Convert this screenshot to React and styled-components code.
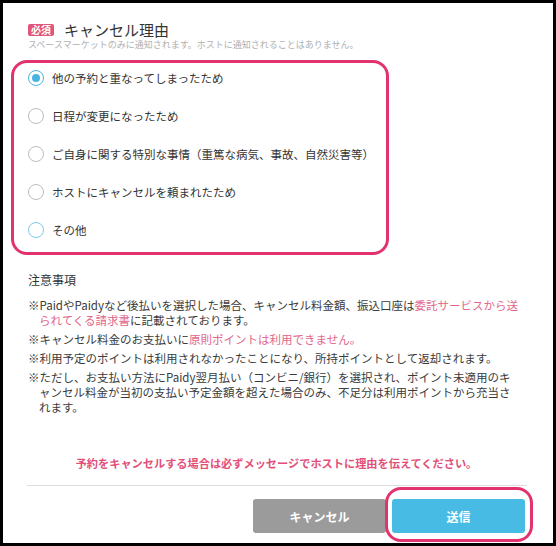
import React from "react";
import styled, { createGlobalStyle } from "styled-components";

const Global = createGlobalStyle`
  html, body { margin: 0; padding: 0; background: #000; }
  body { font-family: "Noto Sans CJK JP", "Noto Sans", sans-serif; }
  * { box-sizing: border-box; }
`;

const Frame = styled.div`
  width: 556px;
  height: 546px;
  padding: 3px;
  background: #000;
`;

const Panel = styled.div`
  width: 550px;
  height: 540px;
  background: #fff;
  padding: 19px 28px 0 25px;
  display: flex;
  flex-direction: column;
  color: #333;
`;

const Header = styled.div`
  display: flex;
  align-items: center;
  gap: 10px;
  height: 16px;
`;

const Badge = styled.span`
  background: #e2557a;
  color: #fff;
  font-size: 10px;
  font-weight: 700;
  line-height: 12px;
  height: 12px;
  padding: 0 3px;
  border-radius: 2px;
`;

const Title = styled.h2`
  margin: 0;
  font-size: 15px;
  font-weight: 400;
  color: #333;
  line-height: 16px;
`;

const Sub = styled.p`
  margin: 1px 0 0;
  font-size: 9px;
  color: #b0b0b0;
  line-height: 12px;
`;

const RadioBox = styled.div`
  margin: 9px 0 0 -17px;
  width: 378px;
  border: 3px solid #e3336c;
  border-radius: 16px;
  padding: 5px 8px 12px 14px;
  display: flex;
  flex-direction: column;
  gap: 18px;
`;

const Row = styled.label`
  display: flex;
  align-items: center;
  gap: 8px;
  height: 20px;
  font-size: 11.5px;
  color: #333;
`;

const Circle = styled.span`
  width: 16px;
  height: 16px;
  border-radius: 50%;
  border: 1px solid ${(p) => (p.$checked ? "#4ab4e2" : p.$focus ? "#7cc9e8" : "#bdbdbd")};
  display: flex;
  align-items: center;
  justify-content: center;
  flex: none;
  &::after {
    content: "";
    width: 8px;
    height: 8px;
    border-radius: 50%;
    background: ${(p) => (p.$checked ? "#4ab4e2" : "transparent")};
  }
`;

const NoteTitle = styled.h3`
  margin: 17px 0 0;
  font-size: 12px;
  font-weight: 400;
  color: #333;
  line-height: 16px;
`;

const Notes = styled.ul`
  list-style: none;
  margin: 10px -4px 0 0;
  padding: 0;
  display: flex;
  flex-direction: column;
  gap: 4px;
`;

const Note = styled.li`
  font-size: 11.5px;
  line-height: 15px;
  color: #3a3a3a;
  padding-left: 11px;
  text-indent: -11px;
`;

const Pink = styled.span`
  color: #e2668b;
`;

const Warning = styled.p`
  margin: 41px 0 0;
  text-align: center;
  font-size: 11.2px;
  font-weight: 700;
  color: #e2507a;
  line-height: 14px;
`;

const Divider = styled.hr`
  margin: 15px -2px 0 -1px;
  border: none;
  border-top: 1px solid #ddd;
  height: 0;
`;

const Buttons = styled.div`
  display: flex;
  justify-content: flex-end;
  gap: 6px;
  margin-top: 13px;
`;

const Button = styled.button`
  width: 133px;
  height: 34px;
  border: none;
  border-radius: 3px;
  background: ${(p) => (p.$primary ? "#48bbe4" : "#9b9b9b")};
  color: #fff;
  font-family: inherit;
  font-size: 12px;
  font-weight: 700;
  position: relative;
`;

const Highlight = styled.span`
  position: absolute;
  top: -12px;
  left: -7px;
  right: -8px;
  bottom: -9px;
  border: 3px solid #e3336c;
  border-radius: 16px;
  pointer-events: none;
`;

const options = [
  "他の予約と重なってしまったため",
  "日程が変更になったため",
  "ご自身に関する特別な事情（重篤な病気、事故、自然災害等）",
  "ホストにキャンセルを頼まれたため",
  "その他",
];

export default function App() {
  return (
    <>
      <Global />
      <Frame>
        <Panel>
          <Header>
            <Badge>必須</Badge>
            <Title>キャンセル理由</Title>
          </Header>
          <Sub>スペースマーケットのみに通知されます。ホストに通知されることはありません。</Sub>
          <RadioBox>
            {options.map((o, i) => (
              <Row key={o}>
                <Circle $checked={i === 0} $focus={i === 4} />
                {o}
              </Row>
            ))}
          </RadioBox>
          <NoteTitle>注意事項</NoteTitle>
          <Notes>
            <Note>
              ※PaidやPaidyなど後払いを選択した場合、キャンセル料金額、振込口座は
              <Pink>
                委託サービスから送
                <br />
                られてくる請求書
              </Pink>
              に記載されております。
            </Note>
            <Note>
              ※キャンセル料金のお支払いに<Pink>原則ポイントは利用できません。</Pink>
            </Note>
            <Note>※利用予定のポイントは利用されなかったことになり、所持ポイントとして返却されます。</Note>
            <Note>
              ※ただし、お支払い方法にPaidy翌月払い（コンビニ/銀行）を選択され、ポイント未適用のキ
              <br />
              ャンセル料金が当初の支払い予定金額を超えた場合のみ、不足分は利用ポイントから充当さ
              <br />
              れます。
            </Note>
          </Notes>
          <Warning>予約をキャンセルする場合は必ずメッセージでホストに理由を伝えてください。</Warning>
          <Divider />
          <Buttons>
            <Button>キャンセル</Button>
            <Button $primary>
              送信
              <Highlight />
            </Button>
          </Buttons>
        </Panel>
      </Frame>
    </>
  );
}
